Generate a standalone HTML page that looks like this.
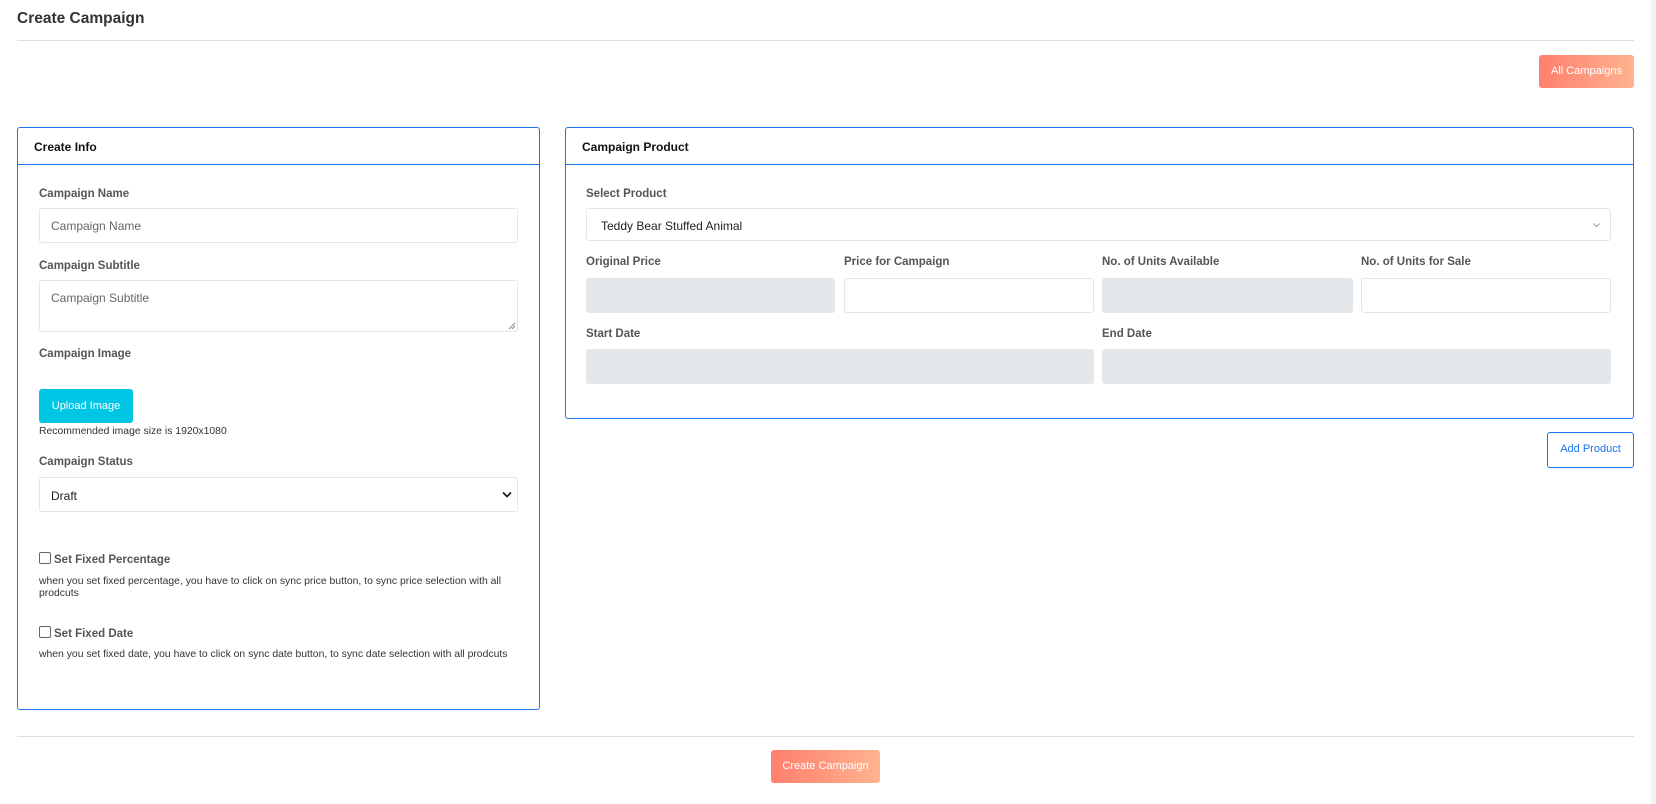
<!DOCTYPE html>
<html><head><meta charset="utf-8"><style>
*{box-sizing:border-box;margin:0;padding:0}
body{width:1656px;height:804px;background:#fff;font-family:"Liberation Sans",Arial,sans-serif;position:relative;overflow:hidden;color:#212529}
.a{position:absolute}
.lbl{position:absolute;font-size:11.5px;font-weight:bold;color:#555;line-height:14px}
.in{position:absolute;border:1px solid #e3e5e8;border-radius:3px;background:#fff}
.dis{background:#e4e7ea;border-color:#e4e7ea}
.ph{font-size:12px;color:#666;position:absolute;left:11px}
.card{position:absolute;border:1.5px solid #1a73e8;border-radius:3px}
.ch{position:absolute;left:0;right:0;top:0;height:37px;border-bottom:1.5px solid #1a73e8;font-size:12px;font-weight:bold;padding:12px 0 0 16px;color:#111}
.grad{background:linear-gradient(90deg,#ff7f6e,#ffb38e);color:#fff;font-size:11px;border-radius:3px;text-align:center}
.desc{position:absolute;font-size:10.4px;color:#333;line-height:11.5px}
.cb{position:absolute;width:12px;height:12px;border:1px solid #666;border-radius:2px;background:#fff}
</style></head><body>
<div class="a" style="left:17px;top:10px;font-size:15.5px;font-weight:bold;color:#333">Create Campaign</div>
<div class="a" style="left:17px;top:40px;width:1617px;height:1px;background:#ddd"></div>
<div class="a" style="left:1651px;top:0;width:5px;height:804px;background:#f2f3f5"></div>
<div class="a grad" style="left:1539px;top:55px;width:95px;height:33px;line-height:33px">All Campaigns</div>

<div class="card" style="left:17px;top:127px;width:523px;height:583px">
<div class="ch">Create Info</div></div>
<div class="lbl" style="left:39px;top:187px">Campaign Name</div>
<div class="in" style="left:39px;top:208px;width:479px;height:35px"><span class="ph" style="top:10px">Campaign Name</span></div>
<div class="lbl" style="left:39px;top:259px">Campaign Subtitle</div>
<div class="in" style="left:39px;top:280px;width:479px;height:52px"><span class="ph" style="top:10px">Campaign Subtitle</span>
<svg class="a" style="right:1px;bottom:1px" width="8" height="8"><path d="M7 1L1 7M7 4L4 7" stroke="#888" stroke-width="1"/></svg></div>
<div class="lbl" style="left:39px;top:347px">Campaign Image</div>
<div class="a" style="left:39px;top:389px;width:94px;height:34px;background:#00c6e6;border-radius:3px;color:#fff;font-size:11px;text-align:center;line-height:34px">Upload Image</div>
<div class="desc" style="left:39px;top:426px">Recommended image size is 1920x1080</div>
<div class="lbl" style="left:39px;top:455px">Campaign Status</div>
<div class="in" style="left:39px;top:477px;width:479px;height:35px"><span class="ph" style="top:11px;color:#222">Draft</span>
<svg class="a" style="right:5px;top:13px" width="10" height="8"><path d="M1 1.5L5 5.5L9 1.5" stroke="#222" stroke-width="1.8" fill="none"/></svg></div>
<div class="cb" style="left:39px;top:552px"></div>
<div class="lbl" style="left:54px;top:553px">Set Fixed Percentage</div>
<div class="desc" style="left:39px;top:576px">when you set fixed percentage, you have to click on sync price button, to sync price selection with all<br>prodcuts</div>
<div class="cb" style="left:39px;top:626px"></div>
<div class="lbl" style="left:54px;top:627px">Set Fixed Date</div>
<div class="desc" style="left:39px;top:649px">when you set fixed date, you have to click on sync date button, to sync date selection with all prodcuts</div>

<div class="card" style="left:565px;top:127px;width:1069px;height:292px">
<div class="ch">Campaign Product</div></div>
<div class="lbl" style="left:586px;top:187px">Select Product</div>
<div class="in" style="left:586px;top:208px;width:1025px;height:33px"><span class="ph" style="left:14px;top:10px;color:#222">Teddy Bear Stuffed Animal</span>
<svg class="a" style="right:10px;top:14px" width="7" height="5"><path d="M0.5 0.5L3.5 3.5L6.5 0.5" stroke="#999" stroke-width="1" fill="none"/></svg></div>
<div class="lbl" style="left:586px;top:255px">Original Price</div>
<div class="lbl" style="left:844px;top:255px">Price for Campaign</div>
<div class="lbl" style="left:1102px;top:255px">No. of Units Available</div>
<div class="lbl" style="left:1361px;top:255px">No. of Units for Sale</div>
<div class="in dis" style="left:586px;top:278px;width:249px;height:35px"></div>
<div class="in" style="left:844px;top:278px;width:250px;height:35px"></div>
<div class="in dis" style="left:1102px;top:278px;width:251px;height:35px"></div>
<div class="in" style="left:1361px;top:278px;width:250px;height:35px"></div>
<div class="lbl" style="left:586px;top:327px">Start Date</div>
<div class="lbl" style="left:1102px;top:327px">End Date</div>
<div class="in dis" style="left:586px;top:349px;width:508px;height:35px"></div>
<div class="in dis" style="left:1102px;top:349px;width:509px;height:35px"></div>
<div class="a" style="left:1547px;top:432px;width:87px;height:36px;border:1.5px solid #1a73e8;border-radius:3px;color:#1a73e8;font-size:11px;text-align:center;line-height:33px">Add Product</div>

<div class="a" style="left:17px;top:736px;width:1617px;height:1px;background:#ddd"></div>
<div class="a grad" style="left:771px;top:750px;width:109px;height:33px;line-height:33px">Create Campaign</div>
</body></html>
